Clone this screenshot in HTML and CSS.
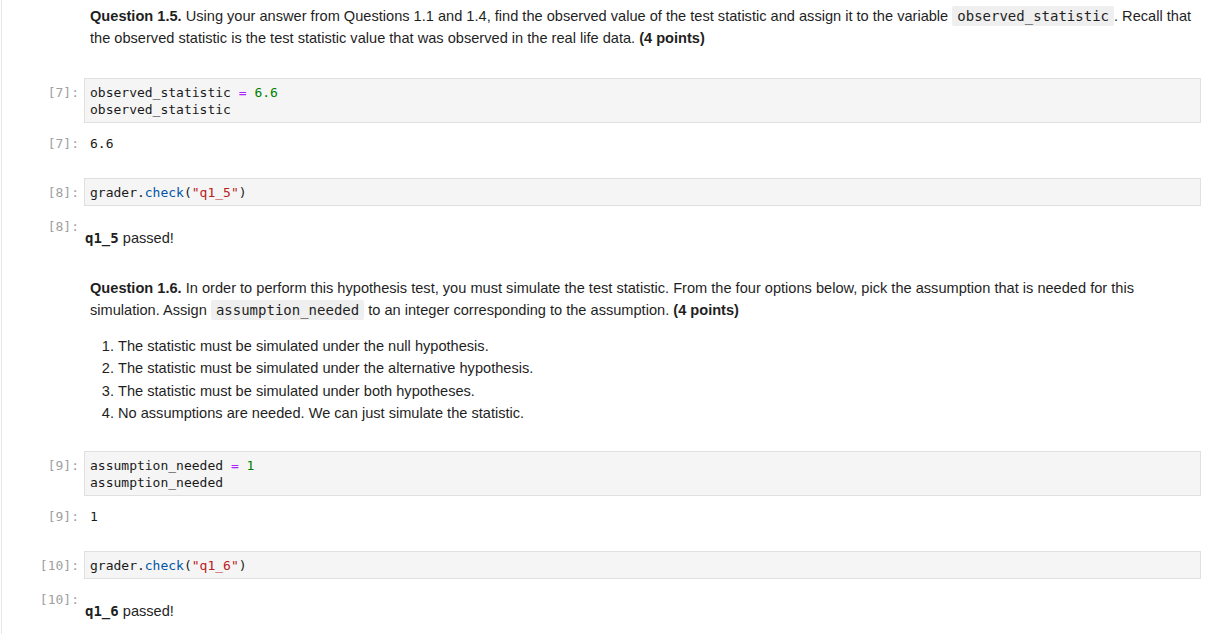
FILE: index.html
```html
<!DOCTYPE html>
<html>
<head>
<meta charset="utf-8">
<link rel="stylesheet" href="styles.css">
</head>
<body>
<div class="nb">
  <div class="cell md md-first">
    <div class="md-body">
      <p><strong>Question 1.5.</strong> Using your answer from Questions 1.1 and 1.4, find the observed value of the test statistic and assign it to the variable <code>observed_statistic</code>. Recall that the observed statistic is the test statistic value that was observed in the real life data. <strong>(4 points)</strong></p>
    </div>
  </div>

  <div class="cell code">
    <div class="row">
      <div class="prompt">[7]:</div>
      <pre class="input">observed_statistic <span class="op">=</span> <span class="num">6.6</span>
observed_statistic</pre>
    </div>
    <div class="row out">
      <div class="prompt">[7]:</div>
      <pre class="output">6.6</pre>
    </div>
  </div>

  <div class="cell code">
    <div class="row">
      <div class="prompt">[8]:</div>
      <pre class="input">grader.<span class="prop">check</span>(<span class="str">"q1_5"</span>)</pre>
    </div>
    <div class="row out">
      <div class="prompt">[8]:</div>
      <div class="html-out"><p><strong class="mono-b">q1_5</strong> passed!</p></div>
    </div>
  </div>

  <div class="cell md">
    <div class="md-body">
      <p><strong>Question 1.6.</strong> In order to perform this hypothesis test, you must simulate the test statistic. From the four options below, pick the assumption that is needed for this simulation. Assign <code>assumption_needed</code> to an integer corresponding to the assumption. <strong>(4 points)</strong></p>
      <ol>
        <li>The statistic must be simulated under the null hypothesis.</li>
        <li>The statistic must be simulated under the alternative hypothesis.</li>
        <li>The statistic must be simulated under both hypotheses.</li>
        <li>No assumptions are needed. We can just simulate the statistic.</li>
      </ol>
    </div>
  </div>

  <div class="cell code">
    <div class="row">
      <div class="prompt">[9]:</div>
      <pre class="input">assumption_needed <span class="op">=</span> <span class="num">1</span>
assumption_needed</pre>
    </div>
    <div class="row out">
      <div class="prompt">[9]:</div>
      <pre class="output">1</pre>
    </div>
  </div>

  <div class="cell code">
    <div class="row">
      <div class="prompt">[10]:</div>
      <pre class="input">grader.<span class="prop">check</span>(<span class="str">"q1_6"</span>)</pre>
    </div>
    <div class="row out">
      <div class="prompt">[10]:</div>
      <div class="html-out"><p><strong class="mono-b">q1_6</strong> passed!</p></div>
    </div>
  </div>
</div>
</body>
</html>
```

FILE: styles.css
```css
html, body {
  margin: 0;
  padding: 0;
  background: #ffffff;
}

body {
  font-family: "Liberation Sans", Arial, sans-serif;
  font-size: 14.6px;
  color: #1f1f1f;
  overflow: hidden;
}

.nb {
  margin-left: 1px;
  border-left: 1px solid #e6e6e6;
  min-height: 634px;
  padding-top: 5px;
  padding-right: 8px;
}

.cell + .cell {
  margin-top: 26px;
}

.md-first + .cell,
.code + .md {
  margin-top: 28px;
}

.md-body {
  padding-left: 88px;
  padding-right: 1px;
  line-height: 22.4px;
}

.md-body p {
  margin: 0;
}

.md-body strong {
  font-weight: bold;
}

.md-body code {
  font-family: "DejaVu Sans Mono", monospace;
  font-size: 14px;
  background: #efefef;
  padding: 2px 5px;
  border-radius: 2px;
}

.md-body ol {
  margin: 13px 0 0 0;
  padding-left: 28px;
}

.md-body li {
  line-height: 22.5px;
}

.row {
  display: flex;
  align-items: flex-start;
}

.prompt {
  width: 77px;
  flex: none;
  text-align: right;
  font-family: "DejaVu Sans Mono", monospace;
  font-size: 13px;
  line-height: 17px;
  color: #a0a0a0;
  margin-right: 5px;
  padding-top: 6px;
}

.input {
  flex: 1;
  margin: 0;
  background: #f5f5f5;
  border: 1px solid #e0e0e0;
  padding: 5px 5px 4px 5px;
  font-family: "DejaVu Sans Mono", monospace;
  font-size: 13px;
  line-height: 17px;
  color: #1a1a1a;
}

.out {
  margin-top: 12px;
}

.out .prompt {
  padding-top: 0;
}

.output {
  margin: 0;
  padding-left: 6px;
  font-family: "DejaVu Sans Mono", monospace;
  font-size: 13px;
  line-height: 17px;
  color: #1a1a1a;
}

.html-out {
  padding-top: 9px;
  padding-left: 1px;
  line-height: 22px;
}

.html-out p {
  margin: 0;
}

.mono-b {
  font-family: "DejaVu Sans Mono", monospace;
  font-weight: bold;
  font-size: 14px;
}

.op { color: #aa22ff; }
.num { color: #008000; }
.prop { color: #0055aa; }
.str { color: #ba2121; }
```
